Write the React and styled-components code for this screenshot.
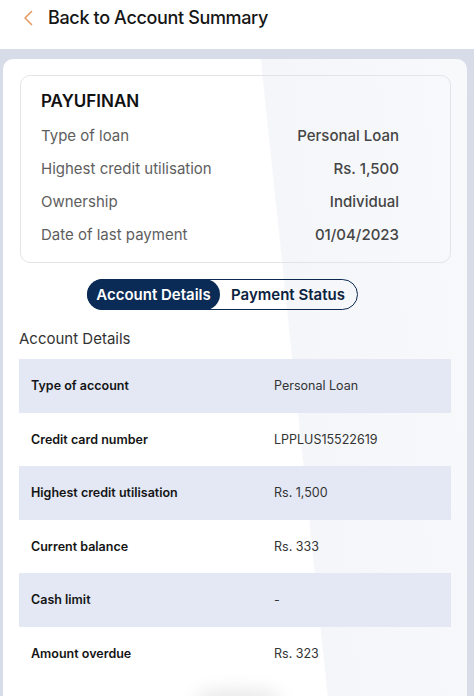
import React from "react";
import styled, { createGlobalStyle } from "styled-components";

const GlobalStyle = createGlobalStyle`
  * { box-sizing: border-box; }
  body {
    margin: 0;
    font-family: Inter, "Noto Sans", sans-serif;
    background: #fff;
    -webkit-font-smoothing: antialiased;
  }
`;

const summary = [
  ["Type of loan", "Personal Loan"],
  ["Highest credit utilisation", "Rs. 1,500"],
  ["Ownership", "Individual"],
  ["Date of last payment", "01/04/2023"],
];

const details = [
  ["Type of account", "Personal Loan"],
  ["Credit card number", "LPPLUS15522619"],
  ["Highest credit utilisation", "Rs. 1,500"],
  ["Current balance", "Rs. 333"],
  ["Cash limit", "-"],
  ["Amount overdue", "Rs. 323"],
];

export default function App() {
  return (
    <Page>
      <GlobalStyle />
      <Header>
        <svg width="10" height="16" viewBox="0 0 10 16" fill="none">
          <path d="M8.5 1.5 L2 8 L8.5 14.5" stroke="#e59a62" strokeWidth="1.6" strokeLinecap="round" strokeLinejoin="round" />
        </svg>
        <Title>Back to Account Summary</Title>
      </Header>
      <Shell>
        <Card>
          <Summary>
            <Lender>PAYUFINAN</Lender>
            {summary.map(([k, v]) => (
              <SummaryRow key={k}>
                <span>{k}</span>
                <strong>{v}</strong>
              </SummaryRow>
            ))}
          </Summary>
          <ToggleWrap>
            <Toggle>
              <Tab active>Account Details</Tab>
              <Tab>Payment Status</Tab>
            </Toggle>
          </ToggleWrap>
          <SectionTitle>Account Details</SectionTitle>
          <Table>
            {details.map(([k, v], i) => (
              <Row key={k} shaded={i % 2 === 0}>
                <Label>{k}</Label>
                <Value>{v}</Value>
              </Row>
            ))}
          </Table>
          <Blob />
        </Card>
      </Shell>
    </Page>
  );
}

const Page = styled.div`
  width: 474px;
  height: 696px;
  overflow: hidden;
  display: flex;
  flex-direction: column;
`;

const Header = styled.div`
  height: 49px;
  flex-shrink: 0;
  display: flex;
  align-items: center;
  gap: 15px;
  padding: 0 0 14px 23px;
  background: #fff;
`;

const Title = styled.h1`
  margin: 0;
  font-size: 18px;
  font-weight: 500;
  color: #161616;
  letter-spacing: -0.35px;
`;

const Shell = styled.div`
  flex: 1;
  background: #d8dce9;
  padding: 10px 7px 0 3px;
  display: flex;
`;

const Card = styled.div`
  position: relative;
  flex: 1;
  border-radius: 10px 10px 0 0;
  background: linear-gradient(84deg, #ffffff 0%, #ffffff 61%, #f5f6f9 61.3%, #f8f9fb 100%);
  padding: 16px 16px 0 16px;
  overflow: hidden;
`;

const Summary = styled.div`
  margin: 0 0 0 1px;
  width: 431px;
  border: 1px solid #e3e4e8;
  border-radius: 10px;
  padding: 14px 51px 11px 20px;
`;

const Lender = styled.div`
  font-size: 17px;
  font-weight: 600;
  color: #111;
  line-height: 22px;
  margin-bottom: 7px;
`;

const SummaryRow = styled.div`
  display: flex;
  justify-content: space-between;
  align-items: center;
  height: 33px;
  font-size: 15px;
  span {
    color: #5e5e5e;
    font-weight: 400;
  }
  strong {
    color: #454545;
    font-weight: 500;
  }
`;

const ToggleWrap = styled.div`
  display: flex;
  padding: 16px 0 0 68px;
`;

const Toggle = styled.div`
  display: flex;
  height: 31px;
  border: 1px solid #0c2a50;
  border-radius: 16px;
  width: 271px;
`;

const Tab = styled.div`
  display: flex;
  align-items: center;
  justify-content: center;
  white-space: nowrap;
  border-radius: 16px;
  font-size: 15px;
  font-weight: 600;
  margin: -1px 0 0 -1px;
  height: 31px;
  flex: ${(p) => (p.active ? "0 0 133px" : "1")};
  background: ${(p) => (p.active ? "#0a2b55" : "transparent")};
  color: ${(p) => (p.active ? "#fff" : "#0c2240")};
`;

const SectionTitle = styled.div`
  font-size: 15px;
  color: #333;
  padding: 20px 0 0 0;
  line-height: 18px;
`;

const Table = styled.div`
  margin-top: 11px;
  width: 432px;
`;

const Row = styled.div`
  display: grid;
  grid-template-columns: 243px 1fr;
  align-items: center;
  height: 53.5px;
  padding-left: 12px;
  background: ${(p) => (p.shaded ? "#e3e8f4" : "transparent")};
`;

const Label = styled.div`
  font-size: 12.5px;
  font-weight: 600;
  color: #141414;
`;

const Value = styled.div`
  font-size: 12.5px;
  color: #333;
`;

const Blob = styled.div`
  position: absolute;
  left: 190px;
  bottom: -14px;
  width: 90px;
  height: 22px;
  border-radius: 50%;
  background: rgba(0, 0, 0, 0.08);
  filter: blur(8px);
`;
